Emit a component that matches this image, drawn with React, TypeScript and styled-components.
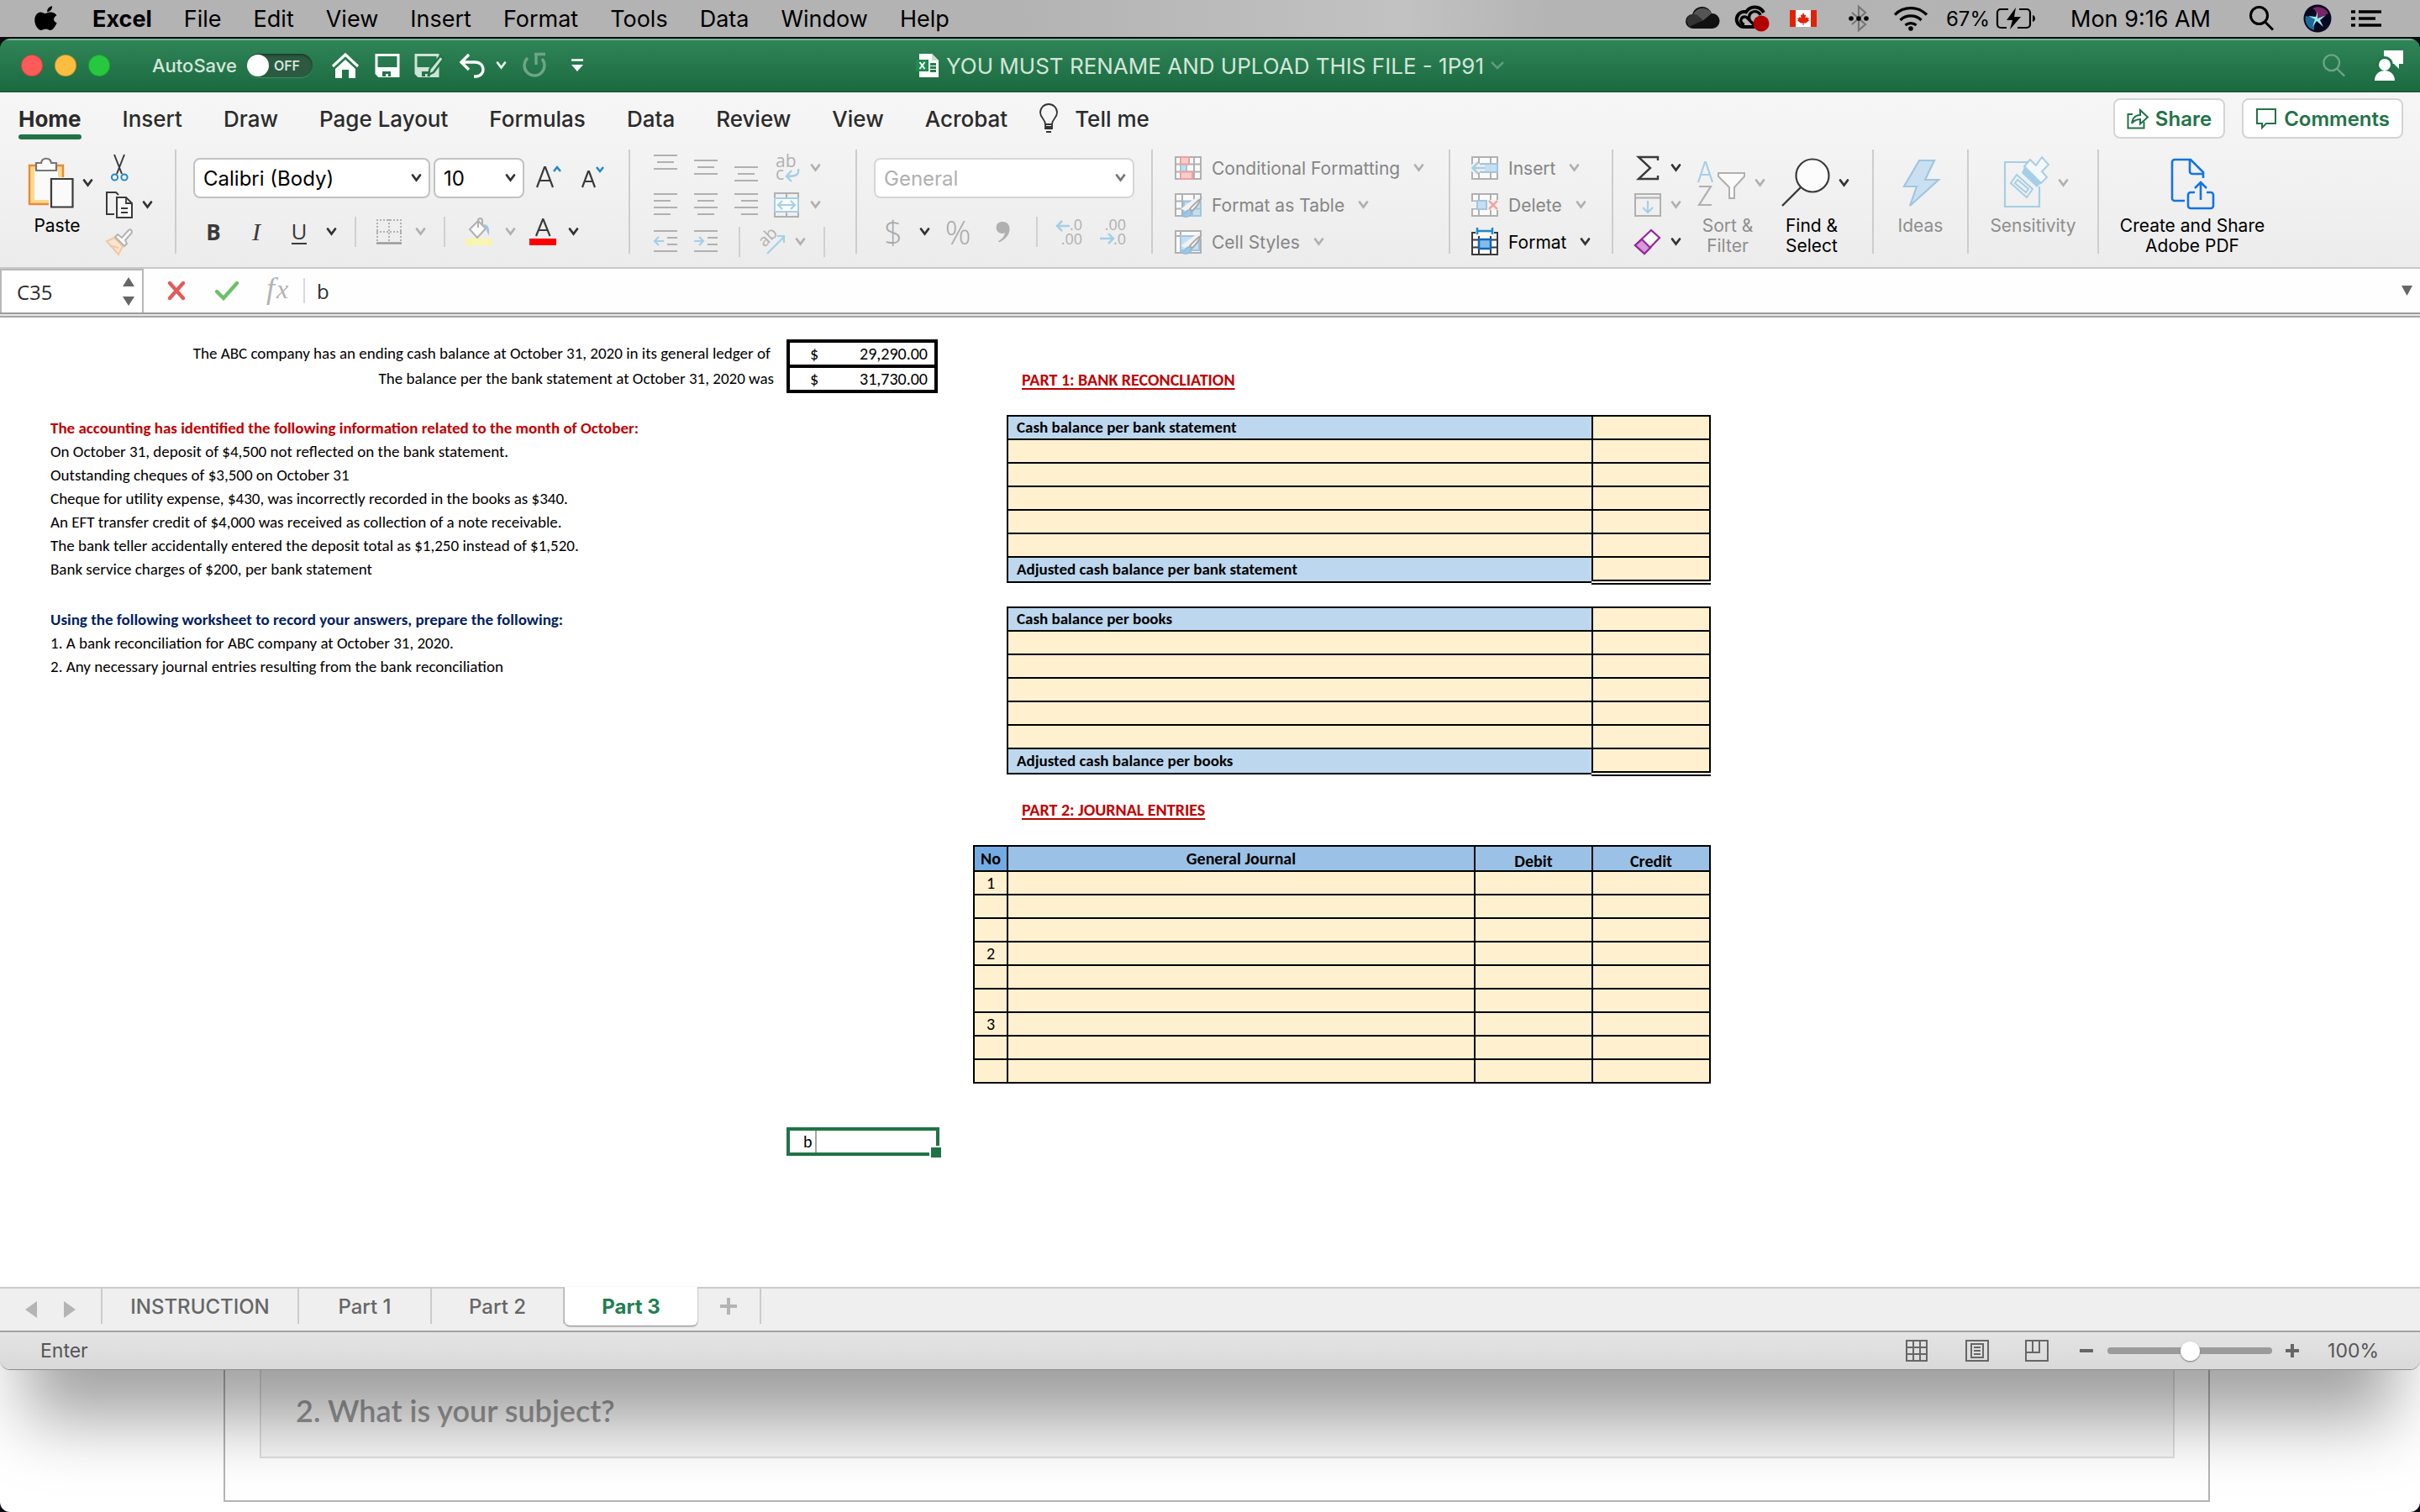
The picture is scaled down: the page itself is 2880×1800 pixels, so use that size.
import React from "react";
import styled, { createGlobalStyle } from "styled-components";

const UI = `Inter, "Liberation Sans", sans-serif`;
const SHEET = `Carlito, Lato, sans-serif`;

const Global = createGlobalStyle`
  * { box-sizing: border-box; }
  body { margin: 0; background: #0b0b10; font-family: ${UI}; color: #111; }
  button, input, select { font: inherit; color: inherit; background: none; border: 0; padding: 0; margin: 0; outline: 0; }
  svg { display: block; flex: none; overflow: visible; }
`;

/* ---------- shared pieces ---------- */

const Svg = ({ w, h, children }: { w: number; h: number; children: React.ReactNode }) => (
  <svg width={w} height={h} viewBox={`0 0 ${w} ${h}`} fill="none" aria-hidden="true">
    {children}
  </svg>
);

const Chevron = ({ color = "#333" }: { color?: string }) => (
  <Svg w={13} h={10}>
    <path d="M2 1.5 L6.5 7.5 L11 1.5" stroke={color} strokeWidth={2.8} strokeLinecap="round" />
  </Svg>
);

const GREY = "#b0b0b0";
const BLUE = "#a5cfe6";
const DARK = "#3a3a3a";

const Slot = styled.button<{ $w: number }>`
  width: ${(p) => p.$w}px;
  flex: none;
  display: flex;
  align-items: center;
  justify-content: center;
`;

const Row = styled.div`
  display: flex;
  align-items: center;
`;

/* ---------- screen ---------- */

const Screen = styled.div`
  min-height: 100vh;
  display: flex;
  flex-direction: column;
`;

const MenuBar = styled.header`
  height: 44px;
  margin-bottom: 2px;
  padding: 0 35px 0 36px;
  display: flex;
  align-items: center;
  justify-content: space-between;
  background: linear-gradient(90deg, #b3b3b3 0%, #b3b3b3 42%, #c2c2c2 58%, #b4b4b4 64%, #b3b3b3 100%);
  font-size: 27px;
  color: #000;
`;

const Menus = styled.nav`
  display: flex;
  align-items: center;
  gap: 38px;
`;

const MenuItem = styled.button<{ $bold?: boolean }>`
  font-weight: ${(p) => (p.$bold ? 700 : 400)};
`;

const Battery = styled.span`
  display: flex;
  align-items: center;
  gap: 8px;
  font-size: 24px;
  padding: 0 40px 0 14px;
`;

const Clock = styled.span`
  padding-right: 24px;
`;

const WindowShade = styled.div`
  position: relative;
  z-index: 1;
  flex: 1;
  display: flex;
  flex-direction: column;
  border-radius: 12px;
  box-shadow: 0 1px 0 #8c8c8c, 0 90px 76px -30px rgba(0, 0, 0, 0.36);
`;

const Window = styled.main`
  flex: 1;
  display: flex;
  flex-direction: column;
  border-radius: 12px;
  overflow: hidden;
`;

/* ---------- title bar ---------- */

const TitleBar = styled.div`
  height: 64px;
  display: grid;
  grid-template-columns: 1fr auto 1fr;
  align-items: center;
  background: linear-gradient(#2f8557, #1c6a40);
  border-top: 2px solid #79b193;
  border-bottom: 2px solid #185c37;
  color: #d3e6db;
`;

const Lights = styled.div`
  display: flex;
  gap: 14px;
  padding: 0 50px 0 25px;
`;

const Light = styled.button<{ $c: string }>`
  width: 26px;
  height: 26px;
  border-radius: 50%;
  background: ${(p) => p.$c};
  border: 1px solid rgba(0, 0, 0, 0.2);
`;

const AutoSave = styled.label`
  display: flex;
  align-items: center;
  gap: 12px;
  font-size: 22px;
  font-weight: 500;
  margin-right: 14px;
`;

const Toggle = styled.span`
  width: 78px;
  height: 28px;
  border-radius: 14px;
  background: #2b5a41;
  box-shadow: inset 0 2px 3px rgba(0, 0, 0, 0.35), 0 1px 0 #3d8f63;
  display: flex;
  align-items: center;
  gap: 6px;
  font-size: 16px;
  font-weight: 600;
`;

const Knob = styled.input`
  appearance: none;
  width: 26px;
  height: 26px;
  border-radius: 50%;
  background: #fff;
`;

const DocTitle = styled.h1`
  margin: 0;
  display: flex;
  align-items: center;
  gap: 8px;
  font-size: 26px;
  font-weight: 400;
  white-space: nowrap;
`;

const TitleRight = styled.div`
  display: flex;
  justify-content: flex-end;
  align-items: center;
  gap: 34px;
  padding-right: 20px;
`;

/* ---------- ribbon ---------- */

const Ribbon = styled.section`
  background: linear-gradient(#f6f6f6, #f2f2f2 45%, #ececec);
  border-bottom: 2px solid #c8c8c8;
`;

const TabRow = styled.div`
  height: 68px;
  padding: 6px 20px 12px 22px;
  display: flex;
  align-items: center;
  justify-content: space-between;
`;

const TabsAndHelp = styled.div`
  display: flex;
  gap: 38px;
`;

const Tabs = styled.nav`
  display: flex;
  gap: 49px;
`;

const RibbonTab = styled.button<{ $active?: boolean }>`
  position: relative;
  height: 50px;
  display: flex;
  align-items: center;
  gap: 20px;
  font-size: 26px;
  font-weight: ${(p) => (p.$active ? 700 : 500)};
  color: #2b2b2b;
  &::after {
    content: "";
    display: ${(p) => (p.$active ? "block" : "none")};
    position: absolute;
    left: 0;
    right: 0;
    bottom: 0;
    height: 6px;
    border-radius: 3px;
    background: #217346;
  }
`;

const Actions = styled.div`
  display: flex;
  gap: 20px;
`;

const ActionButton = styled.button`
  height: 48px;
  padding: 0 14px;
  display: flex;
  align-items: center;
  gap: 8px;
  border: 2px solid #d4d4d4;
  border-radius: 8px;
  background: #fff;
  color: #217346;
  font-size: 24px;
  font-weight: 600;
`;

const RibbonBody = styled.div`
  height: 140px;
  display: grid;
  grid-template-columns: 210px 540px 270px 352px 354px 194px 310px 113px 155px 1fr;
`;

const Group = styled.div<{ $pad?: number; $gap?: number; $center?: boolean; $last?: boolean }>`
  height: 124px;
  display: flex;
  justify-content: ${(p) => (p.$center ? "center" : "flex-start")};
  gap: ${(p) => p.$gap ?? 0}px;
  padding-left: ${(p) => p.$pad ?? 0}px;
  border-right: ${(p) => (p.$last ? "0" : "2px solid #cdcdcd")};
`;

const Stack = styled.div`
  display: flex;
  flex-direction: column;
`;

const Line = styled.div<{ $h: number; $gap?: number }>`
  height: ${(p) => p.$h}px;
  flex: none;
  display: flex;
  align-items: center;
  gap: ${(p) => p.$gap ?? 0}px;
`;

const Big = styled.button<{ $w: number; $off?: boolean }>`
  width: ${(p) => p.$w}px;
  height: 132px;
  padding-top: 10px;
  display: flex;
  flex-direction: column;
  align-items: center;
  font-size: 21px;
  line-height: 24px;
  color: ${(p) => (p.$off ? "#8e8e8e" : "#000")};
`;

const BigIcon = styled.span<{ $menu?: boolean }>`
  height: 60px;
  flex: none;
  margin-bottom: 9px;
  padding-left: ${(p) => (p.$menu ? 8 : 0)}px;
  display: flex;
  align-items: center;
  gap: 10px;
`;

const SmallCommand = styled.button<{ $off?: boolean }>`
  height: 44px;
  flex: none;
  display: flex;
  align-items: center;
  font-size: 21px;
  color: ${(p) => (p.$off ? "#858585" : "#000")};
  span { margin: 0 16px 0 12px; white-space: nowrap; }
`;

const SelectBox = styled.label<{ $w: number; $off?: boolean }>`
  width: ${(p) => p.$w}px;
  height: 48px;
  padding: 0 8px 0 10px;
  display: flex;
  align-items: center;
  border: 2px solid ${(p) => (p.$off ? "#d6d6d6" : "#c2c2c2")};
  border-radius: 8px;
  background: #fff;
  font-size: 24px;
  color: ${(p) => (p.$off ? "#b0b0b0" : "#000")};
  select { appearance: none; flex: 1; min-width: 0; opacity: 1; }
`;

const Rule = styled.i`
  width: 2px;
  height: 36px;
  background: #d0d0d0;
`;

const RuleSlot = styled.span<{ $w: number }>`
  width: ${(p) => p.$w}px;
  display: flex;
  justify-content: center;
`;

const Glyph = styled.span<{ $kind?: "bold" | "italic" | "under" | "big" }>`
  font-family: ${(p) => (p.$kind === "italic" ? `"Liberation Serif", serif` : `"Open Sans", sans-serif`)};
  font-size: ${(p) => (p.$kind === "big" ? 38 : p.$kind === "italic" ? 30 : 26)}px;
  line-height: 28px;
  font-weight: ${(p) => (p.$kind === "bold" ? 700 : p.$kind === "big" ? 300 : 400)};
  font-style: ${(p) => (p.$kind === "italic" ? "italic" : "normal")};
  color: ${(p) => (p.$kind === "big" ? "#a8a8a8" : DARK)};
  border-bottom: ${(p) => (p.$kind === "under" ? `2px solid ${DARK}` : "0")};
`;

/* ---------- formula bar ---------- */

const FormulaBar = styled.div`
  height: 52px;
  display: flex;
  align-items: center;
  background: #fefefe;
  font-family: "Open Sans", sans-serif;
  font-size: 24px;
  color: #2c2c2c;
`;

const NameBox = styled.div`
  width: 171px;
  height: 52px;
  padding: 0 9px 0 18px;
  display: flex;
  align-items: center;
  justify-content: space-between;
  border: 2px solid #b8b8b8;
  border-bottom: 0;
  background: #fff;
  input { width: 90px; }
`;

const FormulaRule = styled.i`
  width: 2px;
  height: 30px;
  margin-right: 14px;
  background: #d8d8d8;
`;

const FormulaInput = styled.input`
  flex: 1;
  min-width: 0;
`;

const SplitLine = styled.div`
  height: 6px;
  background: #e8e8e8;
  border-top: 2px solid #9c9c9c;
  border-bottom: 2px solid #a6a6a6;
`;

/* ---------- sheet ---------- */

const Sheet = styled.section`
  flex: 1;
  display: flex;
  align-items: flex-start;
  background: #fff;
  font-family: ${SHEET};
  font-size: 19px;
  line-height: 22px;
  color: #000;
`;

const Notes = styled.div`
  width: 1158px;
  flex: none;
  padding-top: 26px;
`;

const Balances = styled.table`
  border-collapse: collapse;
  tr { height: 30px; }
  th { width: 938px; padding: 0 15px 0 0; text-align: right; font-weight: 400; white-space: pre; }
  td { width: 176px; padding: 0 8px 0 24px; border: 4px solid #000; font-size: 20px; }
`;

const Money = styled.div`
  display: flex;
  justify-content: space-between;
`;

const NoteBlock = styled.div`
  padding: 28px 0 0 60px;
  & + & { padding-top: 32px; }
`;

const NoteTitle = styled.h2<{ $c: string }>`
  margin: 0;
  font-size: 19px;
  line-height: 28px;
  font-weight: 700;
  color: ${(p) => p.$c};
`;

const Note = styled.p`
  margin: 0;
  line-height: 28px;
`;

const ActiveCell = styled.div`
  position: relative;
  width: 182px;
  height: 34px;
  margin: 534px 0 0 936px;
  border: 4px solid #217346;
  font-size: 20px;
  input { height: 26px; width: 32px; padding-left: 16px; border-right: 2px solid #a8a8a8; }
  &::after {
    content: "";
    position: absolute;
    right: -6px;
    bottom: -6px;
    width: 12px;
    height: 12px;
    background: #217346;
    border: 2px solid #fff;
    border-width: 2px 0 0 2px;
  }
`;

const Answers = styled.div`
  padding-top: 60px;
`;

const PartTitle = styled.h2`
  margin: 0 0 28px 58px;
  font-size: 20px;
  line-height: 28px;
  font-weight: 700;
  color: #c00000;
  text-decoration: underline;
  text-decoration-thickness: 2px;
  text-underline-offset: 3px;
`;

const Grid = styled.table<{ $indent?: boolean }>`
  border-collapse: collapse;
  table-layout: fixed;
  margin: 0 0 26px ${(p) => (p.$indent ? 40 : 0)}px;
  width: ${(p) => (p.$indent ? 838 : 878)}px;
  tr { height: 28px; }
  td, th { border: 2px solid #000; padding: 0; background: #fff1cf; text-align: center; }
`;

const ReconTable = styled(Grid)`
  tr > :first-child { width: 696px; }
  tbody tr:last-child { height: 30px; }
  tbody tr:last-child td { border-bottom: 6px double #000; }
  tr > th { background: #bdd7ee; text-align: left; padding-left: 10px; }
`;

const JournalTable = styled(Grid)`
  thead tr { height: 30px; }
  th { background: #9bc2e6; font-size: 20px; }
  th:nth-child(1) { width: 40px; background: #74abe2; }
  th:nth-child(2) { width: 556px; }
  th:nth-child(3), th:nth-child(4) { width: 140px; vertical-align: bottom; }
  td { font-size: 20px; }
`;

/* ---------- sheet tabs and status ---------- */

const SheetTabs = styled.nav`
  height: 52px;
  display: flex;
  align-items: flex-start;
  background: #efefef;
  border-top: 2px solid #cbcbcb;
  font-size: 24px;
  color: #666;
`;

const Arrows = styled.div`
  width: 122px;
  height: 42px;
  padding: 8px 0 0 30px;
  display: flex;
  align-items: center;
  gap: 32px;
  border-right: 2px solid #cbcbcb;
`;

const SheetTab = styled.button<{ $w: number; $active?: boolean }>`
  width: ${(p) => p.$w}px;
  height: ${(p) => (p.$active ? 46 : 42)}px;
  margin-top: ${(p) => (p.$active ? -2 : 0)}px;
  display: flex;
  align-items: center;
  justify-content: center;
  border-right: ${(p) => (p.$active ? 0 : 2)}px solid #cbcbcb;
  border-radius: ${(p) => (p.$active ? "0 0 6px 6px" : "0")};
  background: ${(p) => (p.$active ? "#fff" : "none")};
  box-shadow: ${(p) => (p.$active ? "0 1px 2px #777" : "none")};
  color: ${(p) => (p.$active ? "#1f8050" : "#666")};
  font-weight: ${(p) => (p.$active ? 700 : 500)};
`;

const StatusBar = styled.footer`
  height: 46px;
  padding: 0 49px 0 48px;
  display: flex;
  align-items: center;
  justify-content: space-between;
  border-top: 2px solid #a2a2a2;
  background: linear-gradient(#e4e4e4, #d9d9d9);
  font-size: 23px;
  color: #555;
`;

const Zoom = styled.input`
  appearance: none;
  width: 196px;
  height: 8px;
  margin-right: 16px;
  border-radius: 4px;
  background: #9b9b9b;
  &::-webkit-slider-thumb {
    appearance: none;
    width: 23px;
    height: 23px;
    border-radius: 50%;
    background: #fff;
    box-shadow: 0 1px 2px #777;
  }
`;

const Percent = styled.output`
  margin-left: 34px;
`;

/* ---------- page behind the window ---------- */

const Backdrop = styled.section`
  height: 182px;
  margin-top: -12px;
  padding: 12px 250px 0 266px;
  background: #fff;
  border-radius: 0 0 12px 12px;
`;

const Page = styled.div`
  height: 158px;
  padding: 0 40px 50px 41px;
  border: 2px solid #b4b4b4;
  border-top: 0;
`;

const Question = styled.h2`
  height: 106px;
  margin: 0;
  padding: 25px 0 0 41px;
  border: 2px solid #dedede;
  border-top: 0;
  background: #f7f7f7;
  font: 600 36px/48px Lato, sans-serif;
  color: #999;
`;

/* ---------- icons ---------- */

const Apple = () => (
  <Svg w={36} h={36}>
    <path
      d="M24 3.500c.2 2-.6 3.900-1.800 5.300-1.200 1.400-3 2.400-4.700 2.200-.2-1.900.7-3.900 1.800-5.100C20.500 4.500 22.500 3.600 24 3.500zM30 25.200c-.8 1.900-1.200 2.700-2.300 4.400-1.500 2.300-3.500 5.100-6.100 5.100-2.300 0-2.900-1.500-6-1.500s-3.800 1.500-6.100 1.500c-2.500 0-4.500-2.600-6-4.900C-.1 23.500.5 13 8.200 11.500c2.700-.3 5 1.700 6.700 1.700s4.300-2.100 7.700-1.700c1.400.1 4.900.6 7.200 4-5.300 3.200-4.500 8.200.2 9.700z"
      fill="#000"
      transform="translate(4 0) scale(.92)"
    />
  </Svg>
);

const Search = ({ s = 30, c = "#000", sw = 3 }: { s?: number; c?: string; sw?: number }) => (
  <svg width={s} height={s} viewBox="0 0 30 30" fill="none" aria-hidden="true">
    <circle cx={11.5} cy={11.5} r={10} stroke={c} strokeWidth={sw} />
    <path d="M18.500 19 L28 28.500" stroke={c} strokeWidth={sw} />
  </svg>
);

const lines = (rows: [number, number, number][]) =>
  rows.map(([x, y, w]) => <path key={y} d={`M${x} ${y}h${w}`} stroke={GREY} strokeWidth={2} />);

const AlignIcon = ({ rows }: { rows: [number, number, number][] }) => (
  <Svg w={28} h={32}>{lines(rows)}</Svg>
);

const GridBase = ({ c = GREY }: { c?: string }) => (
  <path d="M1 3h30v26H1zM1 11.500h30M1 20.500h30M9 3v26M23 3v26" stroke={c} strokeWidth={2} fill="#fafafa" />
);

const Brush = () => (
  <g>
    <path d="M30 8 L18 22 L14 20 Z" fill="#fafafa" stroke="#f2f2f2" strokeWidth={7} />
    <path d="M31 9c-4 2-11 9-13 12l2.500 2.500C24 20 30 13 31 9z" fill="#fafafa" stroke="#a6a6a6" strokeWidth={2} />
    <path d="M17 22c-5 0-4 6-9 6.500 4 3 12 2 11.500-4z" fill="#9fc6e2" stroke="#8fbcdd" strokeWidth={1.500} />
  </g>
);

const ConditionalIcon = () => (
  <Svg w={32} h={32}>
    <GridBase />
    <path d="M7 11.500h7v9H7z" fill="#c5dff0" stroke="#9fc6e2" strokeWidth={2} />
    <path d="M7 3h10v8.500H7zM7 20.500h14V29H7z" fill="#f8cdd0" stroke="#f0a09c" strokeWidth={2} />
  </Svg>
);

const TableIcon = () => (
  <Svg w={32} h={32}>
    <GridBase />
    <path d="M11 12h20v17H11z" fill="#c5dff0" stroke="#9fc6e2" strokeWidth={2} />
    <path d="M11 20.500h20M21 12v17" stroke="#9fc6e2" strokeWidth={2} />
    <Brush />
  </Svg>
);

const StylesIcon = () => (
  <Svg w={32} h={32}>
    <path d="M1 3h30v26H1zM1 9h30M7 3v26" stroke={GREY} strokeWidth={2} fill="#fafafa" />
    <path d="M7 9h22v17H7z" fill="#c5dff0" stroke="#9fc6e2" strokeWidth={2} />
    <Brush />
  </Svg>
);

const InsertIcon = () => (
  <Svg w={32} h={32}>
    <GridBase />
    <path d="M12 11h19v10H12z" fill="#c5dff0" stroke="#9fc6e2" strokeWidth={2} />
    <path d="M16 16H2M8 9.500L1.500 16 8 22.500" stroke="#f2f2f2" strokeWidth={7} />
    <path d="M16 16H2M8 9.500L1.500 16 8 22.500" stroke={BLUE} strokeWidth={2.500} />
  </Svg>
);

const DeleteIcon = () => (
  <Svg w={32} h={32}>
    <GridBase />
    <path d="M0 12h7v8H0z" fill="#f2f2f2" />
    <path d="M7 11h11v10H7z" fill="#c5dff0" stroke="#9fc6e2" strokeWidth={2} />
    <path d="M19 10h14v12H19z" fill="#f2f2f2" />
    <path d="M21 11l10 10M31 11L21 21" stroke="#f0a5a0" strokeWidth={2.500} />
  </Svg>
);

const FormatIcon = () => (
  <Svg w={32} h={34}>
    <path d="M5 6H1v26h30V6h-4M1 14.500h30M1 23.500h30M9 10v22M23 10v22" stroke={DARK} strokeWidth={2} fill="#fafafa" />
    <path d="M9 14h14v11H9z" fill="#83bdec" stroke="#1467b8" strokeWidth={2.500} />
    <path d="M7 4h18M7 0v8M25 0v8" stroke="#1e8bcd" strokeWidth={2.500} />
  </Svg>
);

const FloppyIcon = ({ edit }: { edit?: boolean }) => (
  <Svg w={edit ? 36 : 30} h={30}>
    <path d="M2 2.500h26v25H5l-3-3z" stroke={edit ? "#cfe3d8" : "#fff"} strokeWidth={3} />
    <path d="M3 17h24v10H5l-2-2z" fill={edit ? "#cfe3d8" : "#fff"} />
    <path d="M9 28v-6h10v6h-3v-3h-3v3z" fill="#237448" />
    {edit && (
      <path d="M17 26l1.500-7L31 3.500l4 3.500L23 23z" fill="#cfe3d8" stroke="#237448" strokeWidth={2.500} />
    )}
  </Svg>
);

const DecimalIcon = ({ inc }: { inc?: boolean }) => (
  <svg width={34} height={36} viewBox="0 0 34 36" fill="none" aria-hidden="true" fontFamily="Open Sans" fontSize={18}>
    <text x={32} y={16} textAnchor="end" fill={GREY}>{inc ? ".0" : ".00"}</text>
    <text x={32} y={33} textAnchor="end" fill={GREY}>{inc ? ".00" : ".0"}</text>
    {inc ? (
      <path d="M17 11H3M8 5l-6 6 6 6" stroke={BLUE} strokeWidth={2.500} />
    ) : (
      <path d="M1 26h15M11 20l6 6-6 6" stroke={BLUE} strokeWidth={2.500} />
    )}
  </svg>
);

const cloudPath = "M9 27a8.500 8.500 0 0 1-1-17A12 12 0 0 1 31 9a9 9 0 0 1 1 18z";

/* ---------- data ---------- */

const menus = ["File", "Edit", "View", "Insert", "Format", "Tools", "Data", "Window", "Help"];
const tabs = ["Home", "Insert", "Draw", "Page Layout", "Formulas", "Data", "Review", "View", "Acrobat"];
const facts = [
  "On October 31, deposit of $4,500 not reflected on the bank statement.",
  "Outstanding cheques of $3,500 on October 31",
  "Cheque for utility expense, $430, was incorrectly recorded in the books as $340.",
  "An EFT transfer credit of $4,000 was received as collection of a note receivable.",
  "The bank teller accidentally entered the deposit total as $1,250 instead of $1,520.",
  "Bank service charges of $200, per bank statement",
];
const journal = ["1", "", "", "2", "", "", "3", "", ""];

const Recon = ({ what }: { what: string }) => (
  <ReconTable $indent>
    <tbody>
      <tr><th scope="row">Cash balance per {what}</th><td /></tr>
      {[1, 2, 3, 4, 5].map((n) => (<tr key={n}><td /><td /></tr>))}
      <tr><th scope="row">Adjusted cash balance per {what}</th><td /></tr>
    </tbody>
  </ReconTable>
);

/* ---------- regions ---------- */

const MacMenu = () => (
  <MenuBar>
    <Menus>
      <MenuItem aria-label="Apple menu"><Apple /></MenuItem>
      <MenuItem $bold>Excel</MenuItem>
      {menus.map((m) => <MenuItem key={m}>{m}</MenuItem>)}
    </Menus>
    <Row>
      <Slot $w={58} aria-label="Cloud storage">
        <Svg w={42} h={30}>
          <path d={cloudPath} fill="#111" />
          <path d="M9 11A12 12 0 0 1 31 9l-11 9z" fill="#555" />
          <path d="M1 18a9 9 0 0 1 13-7l7 6-17 8z" fill="#333" />
        </Svg>
      </Slot>
      <Slot $w={58} aria-label="Creative Cloud">
        <Svg w={42} h={32}>
          <path d="M24 26H12a9 9 0 1 1 2-17.700A12 12 0 0 1 35 9" stroke="#000" strokeWidth={4} />
          <path d="M25 25l-9-9a4.500 4.500 0 1 0-4 7M20 20a7 7 0 1 1 11-8" stroke="#000" strokeWidth={3.400} />
          <circle cx={32} cy={22} r={9.500} fill="#b30000" />
        </Svg>
      </Slot>
      <Slot $w={64} aria-label="Keyboard language">
        <Svg w={32} h={20}>
          <path d="M0 0h32v20H0z" fill="#fff" />
          <path d="M0 0h7v20H0zM25 0h7v20h-7z" fill="#e32109" />
          <path d="M16 3l1.500 3 1.500-.5-.5 4 2-1.500.5 1.500h2l-1 2 1 1-4 3h-2.500V18h-1v-2.500H13l-4-3 1-1-1-2h2l.5-1.500 2 1.500-.5-4 1.500.500z" fill="#e32109" />
        </Svg>
      </Slot>
      <Slot $w={68} aria-label="Bluetooth">
        <Svg w={26} h={32}>
          <path d="M5 9l16 14-8 7V2l8 7L5 23" stroke="#777" strokeWidth={2.200} />
          <circle cx={4} cy={16} r={2.800} fill="#000" /><circle cx={13} cy={16} r={2.800} fill="#000" /><circle cx={22} cy={16} r={2.800} fill="#000" />
        </Svg>
      </Slot>
      <Slot $w={56} aria-label="Wi-Fi">
        <Svg w={42} h={30}>
          <path d="M2 10.500a27 27 0 0 1 38 0M8.500 17a18 18 0 0 1 25 0M14.500 23a10 10 0 0 1 13 0" stroke="#000" strokeWidth={3.200} />
          <circle cx={21} cy={27} r={2.800} fill="#000" />
        </Svg>
      </Slot>
      <Battery>
        67%
        <Svg w={48} h={26}>
          <path d="M14 2H5a4 4 0 0 0-4 4v14a4 4 0 0 0 4 4h7M27 2h9a4 4 0 0 1 4 4v14a4 4 0 0 1-4 4H25" stroke="#000" strokeWidth={2.200} />
          <path d="M23 0L12 15h7l-3 11 13-15h-8z" fill="#000" />
          <path d="M43 9c4 1 4 7 0 8z" fill="#000" />
        </Svg>
      </Battery>
      <Clock>Mon 9:16 AM</Clock>
      <Slot $w={74} aria-label="Spotlight"><Search /></Slot>
      <Slot $w={58} aria-label="Siri">
        <Svg w={34} h={34}>
          <circle cx={17} cy={17} r={16.500} fill="#08081e" />
          <path d="M3 14a14 14 0 0 0 10 17c0-6 1-11 4-14z" fill="#1e86b8" opacity={0.8} />
          <path d="M30 11a14 14 0 0 0-19-6c5 2 5 8 6 12z" fill="#8d2a72" opacity={0.85} />
          <path d="M17 17l10-4-7 6 4 8-8-7-5 7 3-9-8-4 9 1 2-6z" fill="#9fe3ea" />
        </Svg>
      </Slot>
      <Slot $w={58} aria-label="Notification centre">
        <Svg w={36} h={22}>
          <path d="M9 3h27M9 11h20M9 19h27M0 3h5M0 11h5M0 19h5" stroke="#000" strokeWidth={3.600} />
        </Svg>
      </Slot>
    </Row>
  </MenuBar>
);

const Title = () => (
  <TitleBar>
    <Row>
      <Lights>
        <Light $c="#fc5b57" aria-label="Close" />
        <Light $c="#fdbd3f" aria-label="Minimise" />
        <Light $c="#27c840" aria-label="Zoom window" />
      </Lights>
      <AutoSave>
        AutoSave
        <Toggle><Knob type="checkbox" />OFF</Toggle>
      </AutoSave>
      <Slot $w={50} aria-label="Home">
        <Svg w={32} h={30}>
          <path d="M1 16L16 2l15 14" stroke="#fff" strokeWidth={3.200} />
          <path d="M16 8l12 11v11h-8V20h-8v10H4V19z" fill="#fff" />
        </Svg>
      </Slot>
      <Slot $w={50} aria-label="Save"><FloppyIcon /></Slot>
      <Slot $w={50} aria-label="Save as"><FloppyIcon edit /></Slot>
      <Slot $w={52} aria-label="Undo">
        <Svg w={32} h={30}>
          <path d="M12 2L3 11l9 9M3 11h16c13 0 13 16 2 17h-3" stroke="#fff" strokeWidth={3.400} />
        </Svg>
      </Slot>
      <Slot $w={18} aria-label="Undo history"><Chevron color="#e6f2ec" /></Slot>
      <Slot $w={60} aria-label="Repeat">
        <Svg w={30} h={32}>
          <path d="M7 7a12 12 0 1 0 17 1M15 2.500h13M17 2v13" stroke="#6ea586" strokeWidth={3.400} />
        </Svg>
      </Slot>
      <Slot $w={42} aria-label="Customise toolbar">
        <Svg w={14} h={16}>
          <path d="M0 1.500h14" stroke="#fff" strokeWidth={2.500} /><path d="M0 7h14l-7 8z" fill="#fff" />
        </Svg>
      </Slot>
    </Row>
    <DocTitle>
      <Svg w={28} h={30}>
        <path d="M4 1h15l8 8v20H4z" fill="#fff" />
        <path d="M19 1l8 8h-8z" fill="#c9dccf" />
        <path d="M17 12h7v3h-7zM17 16h7v3h-7zM17 20h7v3h-7z" fill="#2b7a50" />
        <path d="M0 8h15v14H0z" fill="#1f8a52" />
        <path d="M4.500 11l6 8M10.500 11l-6 8" stroke="#fff" strokeWidth={2} />
      </Svg>
      YOU MUST RENAME AND UPLOAD THIS FILE - 1P91
      <Svg w={16} h={10}>
        <path d="M1 1l7 7 7-7" stroke="#5f9d7c" strokeWidth={2.500} />
      </Svg>
    </DocTitle>
    <TitleRight>
      <button aria-label="Search"><Search s={28} c="#6ea586" sw={2.500} /></button>
      <button aria-label="Account">
        <Svg w={34} h={36}>
          <path d="M11 0h23v16h-5v6l-6-6H11z" fill="#fff" />
          <circle cx={12} cy={17} r={8.500} fill="#fff" stroke="#237448" strokeWidth={3} />
          <path d="M0 36c0-16 24-16 24 0z" fill="#fff" />
        </Svg>
      </button>
    </TitleRight>
  </TitleBar>
);

const RibbonPanel = () => (
  <Ribbon>
    <TabRow>
      <TabsAndHelp>
        <Tabs>
          {tabs.map((t) => <RibbonTab key={t} $active={t === "Home"}>{t}</RibbonTab>)}
        </Tabs>
        <RibbonTab>
          <Svg w={22} h={34}>
            <path d="M7 24c0-6-6-8-6-14a10 10 0 0 1 20 0c0 6-6 8-6 14zM7 24v5h8v-5M7 27h8M8 33h6" stroke="#333" strokeWidth={1.800} />
          </Svg>
          Tell me
        </RibbonTab>
      </TabsAndHelp>
      <Actions>
        <ActionButton>
          <Svg w={26} h={26}>
            <path d="M7 8H1.500v16.500h19V17" stroke="#217346" strokeWidth={2} />
            <path d="M6 19c1-7 5-10 10-10V3l9 8.500-9 8V14c-5 0-8 2-10 5z" stroke="#217346" strokeWidth={2} />
          </Svg>
          Share
        </ActionButton>
        <ActionButton>
          <Svg w={26} h={26}>
            <path d="M2 2h22v17H13l-5 5v-5H2z" stroke="#217346" strokeWidth={2} />
          </Svg>
          Comments
        </ActionButton>
      </Actions>
    </TabRow>
    <RibbonBody>
      <Group $pad={23} $gap={13}>
        <Big $w={90}>
          <BigIcon $menu>
            <Svg w={54} h={60}>
              <path d="M1 9h40v46H1z" fill="#f9d98c" stroke="#ea8a35" strokeWidth={2.400} />
              <path d="M7 14h28v36H7z" fill="#fafafa" />
              <path d="M9 6h6c1-7 11-7 12 0h6v9H9z" fill="#fafafa" stroke="#767676" strokeWidth={2.200} />
              <path d="M24 23h30v37H24z" fill="#f2f2f2" />
              <path d="M27 25h25.500v33.500H27z" fill="#fafafa" stroke="#3a3a3a" strokeWidth={2.200} />
            </Svg>
            <Chevron />
          </BigIcon>
          Paste
        </Big>
        <Stack>
          <Line as="button" $h={44} aria-label="Cut">
            <Svg w={32} h={34}>
              <path d="M10 1l9 23M22 1l-9 23" stroke="#3a3a3a" strokeWidth={2} />
              <circle cx={10.500} cy={28} r={3.600} stroke="#1e8bcd" strokeWidth={2} />
              <circle cx={22} cy={28} r={3.600} stroke="#1e8bcd" strokeWidth={2} />
            </Svg>
          </Line>
          <Line as="button" $h={44} $gap={11} aria-label="Copy">
            <Svg w={32} h={32}>
              <path d="M10 27H1V1h11l3 3" stroke="#3a3a3a" strokeWidth={2} />
              <path d="M13 7h11l7 7v17H13z" fill="#fafafa" stroke="#3a3a3a" strokeWidth={2} />
              <path d="M24 7v7h7M18 20h8M18 25h8" stroke="#3a3a3a" strokeWidth={1.800} />
            </Svg>
            <Chevron />
          </Line>
          <Line as="button" $h={44} aria-label="Format painter">
            <Svg w={32} h={32}>
              <path d="M1 15l9-4 10 10-5 10z" fill="#fbe5cf" stroke="#f1c7a4" strokeWidth={2} />
              <path d="M4 20l11 3" stroke="#f1c7a4" strokeWidth={2} />
              <path d="M11 10l3-3 5 4 8-9c2-2 5 1 4 3l-8 9 2 4-3 3z" fill="#fafafa" stroke="#b3b3b3" strokeWidth={2} />
            </Svg>
          </Line>
        </Stack>
      </Group>

      <Group $pad={20}>
        <Stack>
          <Line $h={68} $gap={4}>
            <SelectBox $w={282}>
              <select aria-label="Font"><option>Calibri (Body)</option></select><Chevron />
            </SelectBox>
            <SelectBox $w={108}>
              <select aria-label="Font size"><option>10</option></select><Chevron />
            </SelectBox>
            <Slot $w={52} aria-label="Increase font size">
              <Svg w={32} h={32}>
                <path d="M1 27L10 3h1l9 24M5 19h11" stroke={DARK} strokeWidth={2.200} />
                <path d="M21 8l4-5 4 5" stroke="#1e8bcd" strokeWidth={2.600} />
              </Svg>
            </Slot>
            <Slot $w={44} aria-label="Decrease font size">
              <Svg w={28} h={32}>
                <path d="M1 27L8 8h1l7 19M4 20h9" stroke={DARK} strokeWidth={2.200} />
                <path d="M18 3l4 5 4-5" stroke="#1e8bcd" strokeWidth={2.600} />
              </Svg>
            </Slot>
          </Line>
          <Line $h={60}>
            <Slot $w={48}><Glyph $kind="bold">B</Glyph></Slot>
            <Slot $w={54}><Glyph $kind="italic">I</Glyph></Slot>
            <Slot $w={48}><Glyph $kind="under">U</Glyph></Slot>
            <Slot $w={28} aria-label="Underline options"><Chevron /></Slot>
            <RuleSlot $w={30}><Rule /></RuleSlot>
            <Slot $w={50} aria-label="Borders">
              <Svg w={30} h={30}>
                <path d="M0 1h30M0 15h30M1 0v27M15 0v27M29 0v27" stroke={GREY} strokeWidth={2} strokeDasharray="2 2" />
                <path d="M0 28.500h30" stroke="#9a9a9a" strokeWidth={2.500} />
              </Svg>
            </Slot>
            <Slot $w={24} aria-label="Border options"><Chevron color={GREY} /></Slot>
            <RuleSlot $w={34}><Rule /></RuleSlot>
            <Slot $w={48} aria-label="Fill colour">
              <Svg w={32} h={34}>
                <path d="M5 14L15 4l9 9-10 11z" fill="#fafafa" stroke={GREY} strokeWidth={2} />
                <path d="M15 12V4c0-4 5-4 5 0v6" stroke={GREY} strokeWidth={2} />
                <path d="M21 8c6 0 8 4 7 13-2-2-3-6-4-8z" fill="#9fc6e2" />
                <path d="M0 25h32v8H0z" fill="#f8f5ae" />
              </Svg>
            </Slot>
            <Slot $w={26} aria-label="Fill colour options"><Chevron color={GREY} /></Slot>
            <Slot $w={52} aria-label="Font colour">
              <Svg w={32} h={34}>
                <path d="M8 22l8-20h.5l8 20M11 15h11" stroke={DARK} strokeWidth={2.200} />
                <path d="M0 25h32v8H0z" fill="#f00" />
              </Svg>
            </Slot>
            <Slot $w={20} aria-label="Font colour options"><Chevron /></Slot>
          </Line>
        </Stack>
      </Group>

      <Group $pad={18}>
        <Stack>
          <Line $h={44}>
            <Slot $w={48} aria-label="Top align"><AlignIcon rows={[[0, 1, 28], [4, 9, 20], [0, 17, 28]]} /></Slot>
            <Slot $w={48} aria-label="Middle align"><AlignIcon rows={[[0, 7, 28], [4, 15, 20], [0, 23, 28]]} /></Slot>
            <Slot $w={48} aria-label="Bottom align"><AlignIcon rows={[[0, 15, 28], [4, 23, 20], [0, 31, 28]]} /></Slot>
            <Slot $w={48} aria-label="Wrap text">
              <svg width={30} height={34} viewBox="0 0 30 34" fill="none" aria-hidden="true" fontFamily="Open Sans" fontSize={21}>
                <text x={2} y={16} fill={GREY}>ab</text>
                <text x={2} y={31} fill={GREY}>c</text>
                <path d="M29 18c1 7-2 9-14 9M21 20l-6 7 6 6" stroke={BLUE} strokeWidth={2.400} />
              </svg>
            </Slot>
            <Slot $w={20} aria-label="Wrap options"><Chevron color={GREY} /></Slot>
          </Line>
          <Line $h={44}>
            <Slot $w={48} aria-label="Align left"><AlignIcon rows={[[0, 3, 28], [0, 11, 20], [0, 19, 28], [0, 27, 20]]} /></Slot>
            <Slot $w={48} aria-label="Centre"><AlignIcon rows={[[0, 3, 28], [4, 11, 20], [0, 19, 28], [4, 27, 20]]} /></Slot>
            <Slot $w={48} aria-label="Align right"><AlignIcon rows={[[0, 3, 28], [8, 11, 20], [0, 19, 28], [8, 27, 20]]} /></Slot>
            <Slot $w={48} aria-label="Merge cells">
              <Svg w={30} h={30}>
                <path d="M1 1h28v28H1zM15 1v28" stroke={GREY} strokeWidth={2} />
                <path d="M1 7h28v16H1z" fill="#fafafa" stroke={BLUE} strokeWidth={2} />
                <path d="M5 15h20M10 10l-5 5 5 5M20 10l5 5-5 5" stroke={BLUE} strokeWidth={2.200} />
              </Svg>
            </Slot>
            <Slot $w={20} aria-label="Merge options"><Chevron color={GREY} /></Slot>
          </Line>
          <Line $h={44}>
            <Slot $w={48} aria-label="Decrease indent">
              <Svg w={28} h={32}>
                {lines([[0, 3, 28], [16, 11, 12], [16, 19, 12], [0, 27, 28]])}
                <path d="M12 15H1M6 10l-5 5 5 5" stroke={BLUE} strokeWidth={2.200} />
              </Svg>
            </Slot>
            <Slot $w={48} aria-label="Increase indent">
              <Svg w={28} h={32}>
                {lines([[0, 3, 28], [16, 11, 12], [16, 19, 12], [0, 27, 28]])}
                <path d="M0 15h11M6 10l5 5-5 5" stroke={BLUE} strokeWidth={2.200} />
              </Svg>
            </Slot>
            <RuleSlot $w={32}><Rule /></RuleSlot>
            <Slot $w={44} aria-label="Orientation">
              <svg width={34} height={34} viewBox="0 0 34 34" fill="none" aria-hidden="true" fontFamily="Open Sans" fontSize={20}>
                <text x={0} y={0} fill={GREY} transform="translate(9 24) rotate(-45)">ab</text>
                <path d="M12 31l20-20M24 10h8v8" stroke={BLUE} strokeWidth={2.200} />
              </svg>
            </Slot>
            <Slot $w={24} aria-label="Orientation options"><Chevron color={GREY} /></Slot>
            <RuleSlot $w={34}><Rule /></RuleSlot>
          </Line>
        </Stack>
      </Group>

      <Group $pad={20}>
        <Stack>
          <Line $h={68}>
            <SelectBox $w={310} $off>
              <select aria-label="Number format"><option>General</option></select><Chevron color="#777" />
            </SelectBox>
          </Line>
          <Line $h={60}>
            <Slot $w={46}><Glyph $kind="big">$</Glyph></Slot>
            <Slot $w={28} aria-label="Currency options"><Chevron /></Slot>
            <Slot $w={52}><Glyph $kind="big">%</Glyph></Slot>
            <Slot $w={56} aria-label="Comma style">
              <Svg w={16} h={26}>
                <path d="M7.500 1A7 7 0 1 0 10 14c-1 5-4 8-8 10l1 1.500C20 18 18 1 7.500 1z" fill={GREY} />
              </Svg>
            </Slot>
            <RuleSlot $w={24}><Rule /></RuleSlot>
            <Slot $w={54} aria-label="Increase decimal"><DecimalIcon inc /></Slot>
            <Slot $w={50} aria-label="Decrease decimal"><DecimalIcon /></Slot>
          </Line>
        </Stack>
      </Group>

      <Group $pad={26}>
        <Stack>
          <SmallCommand $off><ConditionalIcon /><span>Conditional Formatting</span><Chevron color={GREY} /></SmallCommand>
          <SmallCommand $off><TableIcon /><span>Format as Table</span><Chevron color={GREY} /></SmallCommand>
          <SmallCommand $off><StylesIcon /><span>Cell Styles</span><Chevron color={GREY} /></SmallCommand>
        </Stack>
      </Group>

      <Group $pad={25}>
        <Stack>
          <SmallCommand $off><InsertIcon /><span>Insert</span><Chevron color={GREY} /></SmallCommand>
          <SmallCommand $off><DeleteIcon /><span>Delete</span><Chevron color={GREY} /></SmallCommand>
          <SmallCommand><FormatIcon /><span>Format</span><Chevron /></SmallCommand>
        </Stack>
      </Group>

      <Group $pad={25} $gap={10}>
        <Stack>
          <Line as="button" $h={44} $gap={11} aria-label="AutoSum">
            <Svg w={32} h={30}>
              <path d="M28 6V2H5l14 13L5 28h23v-4" stroke={DARK} strokeWidth={2.400} />
            </Svg>
            <Chevron />
          </Line>
          <Line as="button" $h={44} $gap={11} aria-label="Fill">
            <Svg w={32} h={30}>
              <path d="M1 2h30v26H1zM1 6.500h30" stroke={GREY} strokeWidth={2} />
              <path d="M16 10v14M10 18l6 6 6-6" stroke={BLUE} strokeWidth={2.200} />
            </Svg>
            <Chevron color={GREY} />
          </Line>
          <Line as="button" $h={44} $gap={11} aria-label="Clear">
            <Svg w={32} h={32}>
              <path d="M1 20L20 2l10 9-18 19z" fill="#fafafa" stroke="#96289b" strokeWidth={2.200} />
              <path d="M1 20l8-7 10 10-7 7z" fill="#d79ad8" stroke="#96289b" strokeWidth={2.200} />
            </Svg>
            <Chevron />
          </Line>
        </Stack>
        <Big $w={90} $off>
          <BigIcon $menu>
            <Svg w={58} h={56}>
              <path d="M1 27l8-24h1l8 24M4 18h11" stroke={BLUE} strokeWidth={2.200} />
              <path d="M2 32h14L2 54h15" stroke={GREY} strokeWidth={2.200} />
              <path d="M25 16h31v4L44 33v13h-6V33L25 20z" fill="#fafafa" stroke={GREY} strokeWidth={2} />
            </Svg>
            <Chevron color={GREY} />
          </BigIcon>
          Sort &amp;<br />Filter
        </Big>
        <Big $w={90}>
          <BigIcon $menu>
            <Svg w={58} h={60}>
              <circle cx={37} cy={21} r={19.500} fill="#fcfcfc" stroke={DARK} strokeWidth={2.200} />
              <path d="M23 35L1 57" stroke={DARK} strokeWidth={2.400} />
            </Svg>
            <Chevron />
          </BigIcon>
          Find &amp;<br />Select
        </Big>
      </Group>

      <Group $center>
        <Big $w={90} $off>
          <BigIcon>
            <Svg w={44} h={58}>
              <path d="M20 2h18l-11 23h16L9 56l8-23H2z" fill="#c9e0f0" stroke="#9fc6e2" strokeWidth={2.200} />
            </Svg>
          </BigIcon>
          Ideas
        </Big>
      </Group>

      <Group $center>
        <Big $w={110} $off>
          <BigIcon $menu>
            <Svg w={54} h={60}>
              <path d="M30 5H1v53h41V34" stroke={BLUE} strokeWidth={2.200} />
              <path d="M24 10l7-8 7 7 7-10 8 9-8 8 6 7-7 7z" fill="#f3f8fb" stroke={BLUE} strokeWidth={2} />
              <path d="M24 11l20 19-5 5-18-17z" fill={BLUE} />
              <path d="M15 20L8 30l19 17 7-10zM16 26l-3 4 13 11 3-4z" stroke={BLUE} strokeWidth={2} />
            </Svg>
            <Chevron color={GREY} />
          </BigIcon>
          Sensitivity
        </Big>
      </Group>

      <Group $pad={22} $last>
        <Big $w={178}>
          <BigIcon>
            <Svg w={44} h={52}>
              <path d="M13 47H1a3 3 0 0 1-3-3V1a3 3 0 0 1 3-3h19l15 15v7M19-2v14a3 3 0 0 0 3 3h13" stroke="#1473e6" strokeWidth={2.600} />
              <path d="M25 37h-5a3 3 0 0 0-3 3v13a3 3 0 0 0 3 3h24a3 3 0 0 0 3-3V40a3 3 0 0 0-3-3h-5M32 46V26M25 32l7-7 7 7" stroke="#1473e6" strokeWidth={2.600} />
            </Svg>
          </BigIcon>
          Create and Share<br />Adobe PDF
        </Big>
      </Group>
    </RibbonBody>
  </Ribbon>
);

const Formula = () => (
  <>
    <FormulaBar>
      <NameBox>
        <input aria-label="Name box" defaultValue="C35" />
        <Svg w={14} h={34}><path d="M0 11L7 0l7 11zM0 23h14L7 34z" fill="#666" /></Svg>
      </NameBox>
      <Slot $w={78} aria-label="Cancel">
        <Svg w={22} h={22}><path d="M3 2l16 18M19 2L3 20" stroke="#e35a58" strokeWidth={4.400} strokeLinecap="round" /></Svg>
      </Slot>
      <Slot $w={42} aria-label="Enter">
        <Svg w={28} h={24}><path d="M2 13l8 8L26 3" stroke="#6cc067" strokeWidth={4.400} strokeLinecap="round" /></Svg>
      </Slot>
      <Slot $w={70} aria-label="Insert function">
        <svg width={26} height={36} viewBox="0 0 26 36" aria-hidden="true" fontFamily="Liberation Serif" fontStyle="italic" fontSize={36} fill="#b3b3b3">
          <text x={4} y={27}>f</text>
          <text x={16} y={27} fontSize={32}>x</text>
        </svg>
      </Slot>
      <FormulaRule />
      <FormulaInput aria-label="Formula" defaultValue="b" />
      <Slot $w={32} aria-label="Expand formula bar">
        <Svg w={13} h={12}><path d="M0 0h13L6.500 12z" fill="#666" /></Svg>
      </Slot>
    </FormulaBar>
    <SplitLine />
  </>
);

const Worksheet = () => (
  <Sheet>
    <Notes>
      <Balances>
        <tbody>
          <tr>
            <th scope="row">{"The ABC company has an ending cash balance at October 31, 2020 in its general ledger of "}</th>
            <td><Money><span>$</span><span>29,290.00</span></Money></td>
          </tr>
          <tr>
            <th scope="row">The balance per the bank statement at October 31, 2020 was</th>
            <td><Money><span>$</span><span>31,730.00</span></Money></td>
          </tr>
        </tbody>
      </Balances>
      <NoteBlock>
        <NoteTitle $c="#c00000">The accounting has identified the following information related to the month of October:</NoteTitle>
        {facts.map((f) => <Note key={f}>{f}</Note>)}
      </NoteBlock>
      <NoteBlock>
        <NoteTitle $c="#002060">Using the following worksheet to record your answers, prepare the following:</NoteTitle>
        <Note>1. A bank reconciliation for ABC company at October 31, 2020.</Note>
        <Note>2. Any necessary journal entries resulting from the bank reconciliation</Note>
      </NoteBlock>
      <ActiveCell><input aria-label="Cell C35" defaultValue="b" /></ActiveCell>
    </Notes>
    <Answers>
      <PartTitle>PART 1: BANK RECONCLIATION</PartTitle>
      <Recon what="bank statement" />
      <Recon what="books" />
      <PartTitle>PART 2: JOURNAL ENTRIES</PartTitle>
      <JournalTable>
        <thead>
          <tr><th>No</th><th>General Journal</th><th>Debit</th><th>Credit</th></tr>
        </thead>
        <tbody>
          {journal.map((n, i) => (<tr key={i}><td>{n}</td><td /><td /><td /></tr>))}
        </tbody>
      </JournalTable>
    </Answers>
  </Sheet>
);

const Bottom = () => (
  <>
    <SheetTabs>
      <Arrows>
        <button aria-label="Previous sheet"><Svg w={14} h={20}><path d="M14 0v20L0 10z" fill="#b4b4b4" /></Svg></button>
        <button aria-label="Next sheet"><Svg w={14} h={20}><path d="M0 0v20l14-10z" fill="#b4b4b4" /></Svg></button>
      </Arrows>
      <SheetTab $w={234}>INSTRUCTION</SheetTab>
      <SheetTab $w={158}>Part 1</SheetTab>
      <SheetTab $w={158}>Part 2</SheetTab>
      <SheetTab $w={158} $active>Part 3</SheetTab>
      <SheetTab $w={76} aria-label="Add sheet">
        <Svg w={20} h={20}><path d="M0 10h20M10 0v20" stroke="#b4b4b4" strokeWidth={4} /></Svg>
      </SheetTab>
    </SheetTabs>
    <StatusBar>
      <span>Enter</span>
      <Row>
        <Slot $w={70} aria-label="Normal view">
          <Svg w={26} h={26}><path d="M1 1h24v24H1zM1 9h24M1 17h24M9 1v24M17 1v24" stroke="#666" strokeWidth={2} /></Svg>
        </Slot>
        <Slot $w={74} aria-label="Page layout view">
          <Svg w={28} h={26}><path d="M1 1h26v24H1zM7 5h14v16H7zM10 9h8M10 13h8M10 17h8" stroke="#666" strokeWidth={2} /></Svg>
        </Slot>
        <Slot $w={68} aria-label="Page break view">
          <Svg w={28} h={26}><path d="M1 1h26v24H1zM1 15h16V1M9 1v14" stroke="#666" strokeWidth={2} /></Svg>
        </Slot>
        <Slot $w={50} aria-label="Zoom out"><Svg w={16} h={16}><path d="M0 8h16" stroke="#666" strokeWidth={4} /></Svg></Slot>
        <Zoom type="range" aria-label="Zoom" min={0} max={100} defaultValue={50} />
        <button aria-label="Zoom in"><Svg w={16} h={16}><path d="M0 8h16M8 0v16" stroke="#666" strokeWidth={4} /></Svg></button>
        <Percent>100%</Percent>
      </Row>
    </StatusBar>
  </>
);

export default function App() {
  return (
    <Screen>
      <Global />
      <MacMenu />
      <WindowShade>
        <Window>
          <Title />
          <RibbonPanel />
          <Formula />
          <Worksheet />
          <Bottom />
        </Window>
      </WindowShade>
      <Backdrop>
        <Page>
          <Question>2. What is your subject?</Question>
        </Page>
      </Backdrop>
    </Screen>
  );
}
